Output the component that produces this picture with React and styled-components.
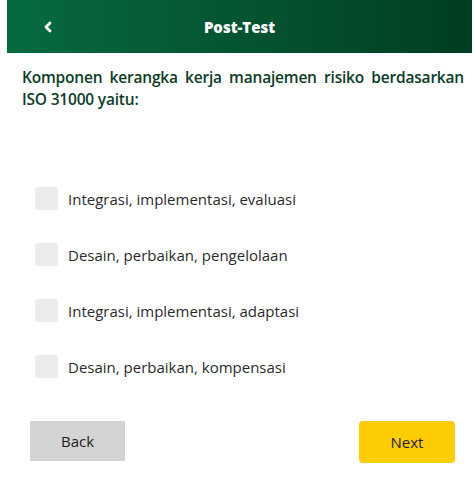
import React, { useState } from "react"
import styled, { createGlobalStyle } from "styled-components"

const GlobalStyle = createGlobalStyle`
  html, body {
    margin: 0;
    padding: 0;
    background: #fff;
    font-family: "Open Sans", "Noto Sans", sans-serif;
  }
`

const Page = styled.div`
  width: 474px;
  height: 480px;
  padding-left: 7px;
  box-sizing: border-box;
  display: flex;
  flex-direction: column;
`

const Header = styled.header`
  position: relative;
  width: 465px;
  height: 53px;
  background: linear-gradient(90deg, #076a3f 0%, #045230 55%, #013d22 100%);
  display: flex;
  align-items: center;
  justify-content: center;
`

const BackIcon = styled.button`
  position: absolute;
  left: 36px;
  top: 50%;
  transform: translateY(-50%);
  background: none;
  border: none;
  padding: 0;
  display: flex;
`

const Title = styled.h1`
  margin: 0;
  color: #fff;
  font-size: 15px;
  font-weight: 800;
`

const Question = styled.p`
  margin: 13px 10px 0 15px;
  color: #0c3d28;
  font-size: 15.5px;
  letter-spacing: -0.2px;
  line-height: 22px;
  text-align: justify;
  font-weight: 600;
`

const Options = styled.div`
  margin-top: 77px;
  padding-left: 28px;
  display: flex;
  flex-direction: column;
  gap: 33px;
`

const Option = styled.label`
  display: flex;
  align-items: center;
  gap: 10px;
  font-size: 15px;
  color: #2b2b2b;
  cursor: pointer;
`

const Box = styled.span`
  width: 23px;
  height: 23px;
  border-radius: 3px;
  background: ${p => (p.checked ? "#076a3f" : "#ececec")};
`

const Footer = styled.div`
  margin-top: auto;
  margin-bottom: 17px;
  padding: 0 19px 0 23px;
  display: flex;
  justify-content: space-between;
  align-items: flex-start;
`

const Button = styled.button`
  width: ${p => (p.primary ? "96px" : "95px")};
  height: ${p => (p.primary ? "42px" : "40px")};
  border: none;
  border-radius: ${p => (p.primary ? "4px" : "0")};
  background: ${p => (p.primary ? "#fdcc03" : "#d4d4d4")};
  color: #1d1d1d;
  font-family: inherit;
  font-size: 15px;
`

const choices = [
  "Integrasi, implementasi, evaluasi",
  "Desain, perbaikan, pengelolaan",
  "Integrasi, implementasi, adaptasi",
  "Desain, perbaikan, kompensasi",
]

const App = () => {
  const [picked, setPicked] = useState(null)
  return (
    <>
      <GlobalStyle />
      <Page>
        <Header>
          <BackIcon aria-label="Back">
            <svg width="10" height="12" viewBox="0 0 10 12">
              <polyline
                points="7,2 3,6 7,10"
                fill="none"
                stroke="#fff"
                strokeWidth="2.8"
                strokeLinecap="round"
                strokeLinejoin="round"
              />
            </svg>
          </BackIcon>
          <Title>Post-Test</Title>
        </Header>
        <Question>
          Komponen kerangka kerja manajemen risiko berdasarkan ISO 31000 yaitu:
        </Question>
        <Options>
          {choices.map((c, i) => (
            <Option key={c} onClick={() => setPicked(i)}>
              <Box checked={picked === i} />
              {c}
            </Option>
          ))}
        </Options>
        <Footer>
          <Button>Back</Button>
          <Button primary>Next</Button>
        </Footer>
      </Page>
    </>
  )
}

export default App
